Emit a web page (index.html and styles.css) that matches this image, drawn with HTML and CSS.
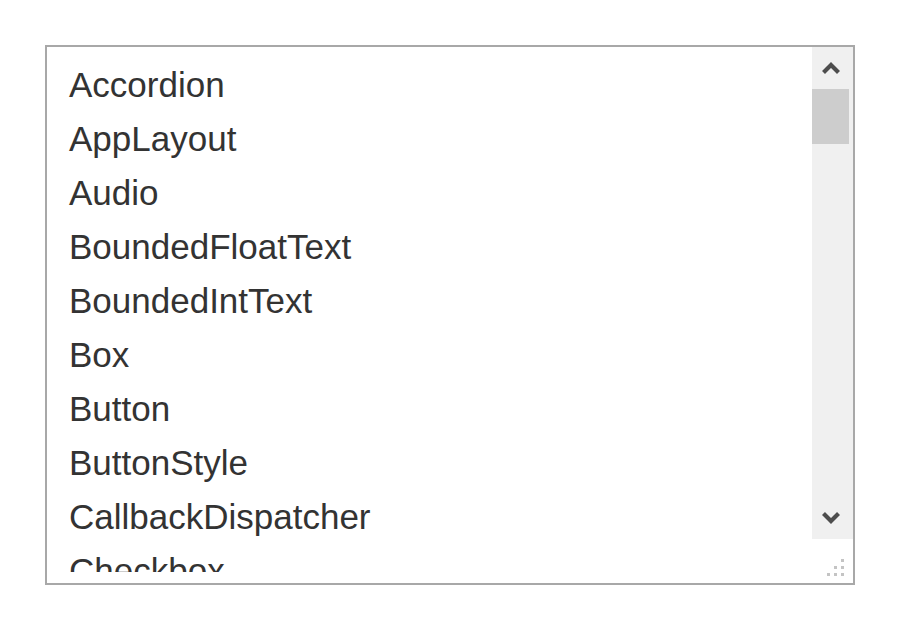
FILE: index.html
```html
<!DOCTYPE html>
<html lang="en">

<head>
    <meta charset="UTF-8">
    <meta name="viewport" content="width=device-width, initial-scale=1.0">
    <title>Widget list</title>
    <link rel="stylesheet" href="styles.css">
</head>

<body>
    <div class="listbox">
        <div class="options">
            <div class="options-inner">
                <div class="option">Accordion</div>
                <div class="option">AppLayout</div>
                <div class="option">Audio</div>
                <div class="option">BoundedFloatText</div>
                <div class="option">BoundedIntText</div>
                <div class="option">Box</div>
                <div class="option">Button</div>
                <div class="option">ButtonStyle</div>
                <div class="option">CallbackDispatcher</div>
                <div class="option">Checkbox</div>
                <div class="option">ColorPicker</div>
            </div>
        </div>
        <div class="scrollbar">
            <div class="scroll-btn">
                <svg width="18" height="12" viewBox="0 0 18 12">
                    <path d="M1.5 10.5 L9 3 L16.5 10.5" fill="none" stroke="#4d4d4d" stroke-width="4.2" />
                </svg>
            </div>
            <div class="scroll-track">
                <div class="scroll-thumb"></div>
            </div>
            <div class="scroll-btn">
                <svg width="18" height="12" viewBox="0 0 18 12">
                    <path d="M1.5 1.5 L9 9 L16.5 1.5" fill="none" stroke="#4d4d4d" stroke-width="4.2" />
                </svg>
            </div>
            <!-- resize grip -->
            <div class="scroll-corner">
                <svg width="18" height="18" viewBox="0 0 18 18">
                    <rect x="14" y="0" width="3" height="3" fill="#c4c4c4" />
                    <rect x="7" y="7" width="3" height="3" fill="#c4c4c4" />
                    <rect x="14" y="7" width="3" height="3" fill="#c4c4c4" />
                    <rect x="0" y="14" width="3" height="3" fill="#c4c4c4" />
                    <rect x="7" y="14" width="3" height="3" fill="#c4c4c4" />
                    <rect x="14" y="14" width="3" height="3" fill="#c4c4c4" />
                </svg>
            </div>
        </div>
    </div>
</body>

</html>
```

FILE: styles.css
```css
body {
    margin: 0;
    padding: 45px;
    background-color: white;
    font-family: "Liberation Sans", Arial, sans-serif;
}

.listbox {
    display: flex;
    width: 810px;
    height: 540px;
    box-sizing: border-box;
    border: 2px solid #a8a8a8;
    background-color: white;
}

.options {
    flex: 1;
    padding: 11px 0;
}

.options-inner {
    height: 514px;
    overflow: hidden;
}

.option {
    height: 54px;
    line-height: 54px;
    padding-left: 22px;
    font-size: 35px;
    color: #333;
    white-space: nowrap;
}

.scrollbar {
    width: 41px;
    display: flex;
    flex-direction: column;
}

.scroll-btn {
    height: 42px;
    background-color: #f0f0f0;
    display: flex;
    justify-content: center;
    align-items: center;
    padding-right: 4px;
}

.scroll-track {
    flex: 1;
    background-color: #f0f0f0;
}

.scroll-thumb {
    width: 37px;
    height: 55px;
    background-color: #cdcdcd;
}

.scroll-corner {
    height: 44px;
    box-sizing: border-box;
    background-color: white;
    display: flex;
    justify-content: flex-end;
    align-items: flex-end;
    padding: 0 8px 6px 0;
}
```
